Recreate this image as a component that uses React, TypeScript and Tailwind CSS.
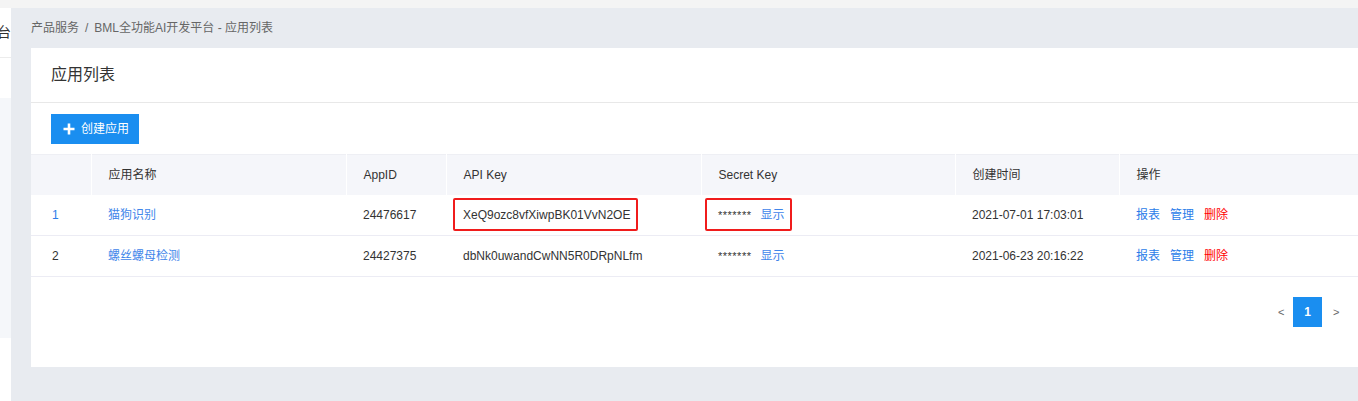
import React from "react";

type Row = {
  no: number;
  name: string;
  appId: string;
  apiKey: string;
  created: string;
  marked?: boolean;
};

const rows: Row[] = [
  { no: 1, name: "猫狗识别", appId: "24476617", apiKey: "XeQ9ozc8vfXiwpBK01VvN2OE", created: "2021-07-01 17:03:01", marked: true },
  { no: 2, name: "螺丝螺母检测", appId: "24427375", apiKey: "dbNk0uwandCwNN5R0DRpNLfm", created: "2021-06-23 20:16:22" },
];

const font = { fontFamily: '"Liberation Sans", "Noto Sans CJK SC", sans-serif' };

const Marked: React.FC<{ on?: boolean; left: string; children: React.ReactNode }> = ({ on, left, children }) => (
  <span className="relative inline-block">
    {children}
    {on && (
      <span className={`pointer-events-none absolute top-[-8px] bottom-[-7px] right-[-8px] rounded-[2px] border-2 border-[#f01c1c] ${left}`} />
    )}
  </span>
);

export default function App() {
  return (
    <div className="flex h-[401px] w-[1358px] flex-col overflow-hidden bg-[#f4f4f4] text-[12px] text-[#333]" style={font}>
      <div className="h-2 shrink-0" />
      <div className="flex min-h-0 flex-1">
        {/* sidebar edge */}
        <aside className="flex w-[11px] shrink-0 flex-col bg-white">
          <div className="flex h-[50px] shrink-0 items-center justify-end overflow-hidden border-b border-[#ececec] text-[14px] text-[#333]">
            <span className="whitespace-nowrap">平台</span>
          </div>
          <div className="h-[40px] shrink-0" />
          <div className="h-[240px] shrink-0 bg-[#f5f7fa]" />
        </aside>

        <main className="min-w-0 flex-1 bg-[#e8ebf0] pl-5">
          <div className="flex h-10 items-center text-[12px] text-[#666]">
            产品服务 <span className="mx-[6px]">/</span> BML全功能AI开发平台 - 应用列表
          </div>

          <section className="w-[1340px] bg-white">
            <div className="flex h-[55px] items-center border-b border-[#e8e8e8] pl-5 text-[16px] text-[#333]">
              应用列表
            </div>

            <div className="pt-[11px]">
              <button className="ml-5 flex h-[30px] w-[88px] items-center gap-[6px] bg-[#1a8ef0] pl-3 text-[12px] text-white">
                <svg width="12" height="12" viewBox="0 0 12 12" aria-hidden>
                  <path d="M6 0.5v11M0.5 6h11" stroke="white" strokeWidth="2.6" />
                </svg>
                创建应用
              </button>

              <table className="mt-[10px] w-full table-fixed border-collapse border-t border-[#eeeff4]">
                <colgroup>
                  <col className="w-[60px]" />
                  <col className="w-[255px]" />
                  <col className="w-[100px]" />
                  <col className="w-[255px]" />
                  <col className="w-[254px]" />
                  <col className="w-[164px]" />
                  <col />
                </colgroup>
                <thead>
                  <tr className="h-10 bg-[#f5f6fa] text-left text-[#333]">
                    <th className="border-r border-white pl-[21px] font-normal"></th>
                    <th className="border-r border-white pl-[17px] font-normal">应用名称</th>
                    <th className="border-r border-white pl-[17px] font-normal">AppID</th>
                    <th className="border-r border-white pl-[17px] font-normal">API Key</th>
                    <th className="border-r border-white pl-[17px] font-normal">Secret Key</th>
                    <th className="border-r border-white pl-[17px] font-normal">创建时间</th>
                    <th className="pl-[17px] font-normal">操作</th>
                  </tr>
                </thead>
                <tbody>
                  {rows.map((r) => (
                    <tr key={r.no} className="h-[41px] border-b border-[#ececf4]">
                      <td className={`pl-[21px] ${r.marked ? "text-[#2b7de9]" : "text-[#333]"}`}>{r.no}</td>
                      <td className="pl-[17px] text-[#3f86ea]">{r.name}</td>
                      <td className="pl-[17px]">{r.appId}</td>
                      <td className="pl-[17px]">
                        <Marked on={r.marked} left="left-[-10px]">{r.apiKey}</Marked>
                      </td>
                      <td className="pl-[17px]">
                        <Marked on={r.marked} left="left-[-13px]">
                          <span className="text-[11px] tracking-[0.5px]">*******</span>
                          <span className="ml-[9px] text-[#3f86ea]">显示</span>
                        </Marked>
                      </td>
                      <td className="pl-[17px]">{r.created}</td>
                      <td className="pl-[17px]">
                        <span className="text-[#2b7de9]">报表</span>
                        <span className="ml-[10px] text-[#2b7de9]">管理</span>
                        <span className="ml-[10px] text-[#f00]">删除</span>
                      </td>
                    </tr>
                  ))}
                </tbody>
              </table>

              <div className="flex h-[90px] items-start pl-[1247px] pt-[20px]">
                <span className="flex h-[30px] w-[15px] items-center text-[11px] text-[#666]">&lt;</span>
                <span className="flex h-[30px] w-[29px] items-center justify-center bg-[#1a8ef0] font-bold text-white">1</span>
                <span className="ml-[11px] flex h-[30px] items-center text-[11px] text-[#666]">&gt;</span>
              </div>
            </div>
          </section>
        </main>
      </div>
    </div>
  );
}
